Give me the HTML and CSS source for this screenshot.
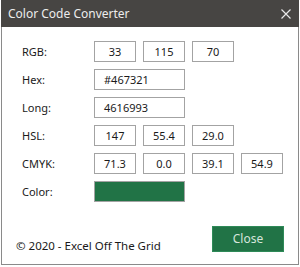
FILE: index.html
```html
<!DOCTYPE html>
<html lang="en">
<head>
    <meta charset="UTF-8">
    <meta name="viewport" content="width=device-width, initial-scale=1.0">
    <title>Color Code Converter</title>
    <link rel="stylesheet" href="styles.css">
</head>
<body>
    <div class="window">
        <div class="title-bar">
            <span class="title">Color Code Converter</span>
            <svg class="close-x" width="10" height="10" viewBox="0 0 10 10">
                <path d="M0.5 0.5 L9.5 9.5 M9.5 0.5 L0.5 9.5" stroke="#e8e8e8" stroke-width="1.2" fill="none"/>
            </svg>
        </div>
        <div class="content">
            <div class="fields">
                <div class="row">
                    <span class="label">RGB:</span>
                    <div class="box num">33</div>
                    <div class="box num">115</div>
                    <div class="box num">70</div>
                </div>
                <div class="row">
                    <span class="label">Hex:</span>
                    <div class="box wide">#467321</div>
                </div>
                <div class="row">
                    <span class="label">Long:</span>
                    <div class="box wide">4616993</div>
                </div>
                <div class="row">
                    <span class="label">HSL:</span>
                    <div class="box num">147</div>
                    <div class="box num">55.4</div>
                    <div class="box num">29.0</div>
                </div>
                <div class="row">
                    <span class="label">CMYK:</span>
                    <div class="box num">71.3</div>
                    <div class="box num">0.0</div>
                    <div class="box num">39.1</div>
                    <div class="box num">54.9</div>
                </div>
                <div class="row">
                    <span class="label">Color:</span>
                    <div class="box wide swatch"></div>
                </div>
            </div>
            <div class="footer">
                <span class="copyright">© 2020 - Excel Off The Grid</span>
                <button class="close-btn">Close</button>
            </div>
        </div>
    </div>
</body>
</html>
```

FILE: styles.css
```css
body, html {
    margin: 0;
    padding: 0;
    background: #ffffff;
    font-family: "Noto Sans", "Open Sans", Arial, sans-serif;
}

.window {
    width: 298px;
    height: 265px;
    margin-left: 1px;
    box-sizing: border-box;
    border: 1px solid #8a8a8a;
    border-top: none;
    background: #ffffff;
    display: flex;
    flex-direction: column;
}

.title-bar {
    height: 27px;
    background: #474543;
    margin: 0 -1px;
    display: flex;
    align-items: center;
    justify-content: space-between;
    padding: 0 8px 0 7px;
}

.title {
    color: #ececec;
    font-size: 12px;
}

.close-x {
    display: block;
}

.content {
    flex: 1;
    display: flex;
    flex-direction: column;
    padding: 14px 14px 0 20px;
}

.fields {
    display: flex;
    flex-direction: column;
    gap: 7px;
}

.row {
    display: flex;
    align-items: center;
    gap: 7px;
    height: 21px;
}

.label {
    width: 65px;
    font-size: 11px;
    color: #1a1a1a;
}

.box {
    height: 21px;
    box-sizing: border-box;
    border: 1px solid #a3a3a3;
    font-size: 11px;
    color: #1a1a1a;
    display: flex;
    align-items: center;
}

.num {
    width: 42px;
    justify-content: center;
}

.wide {
    width: 91px;
    padding-left: 9px;
}

.swatch {
    background: #217346;
    border-color: #a3a3a3;
}

.footer {
    display: flex;
    align-items: center;
    justify-content: space-between;
    margin-top: 22px;
}

.copyright {
    font-size: 11.5px;
    color: #1a1a1a;
    margin-left: -6px;
    margin-top: 14px;
}

.close-btn {
    width: 72px;
    height: 26px;
    background: #217346;
    border: 1px solid #2e8a58;
    color: #d6e6dc;
    font-family: "Noto Sans", "Open Sans", Arial, sans-serif;
    font-size: 12px;
    padding: 0;
}
```
